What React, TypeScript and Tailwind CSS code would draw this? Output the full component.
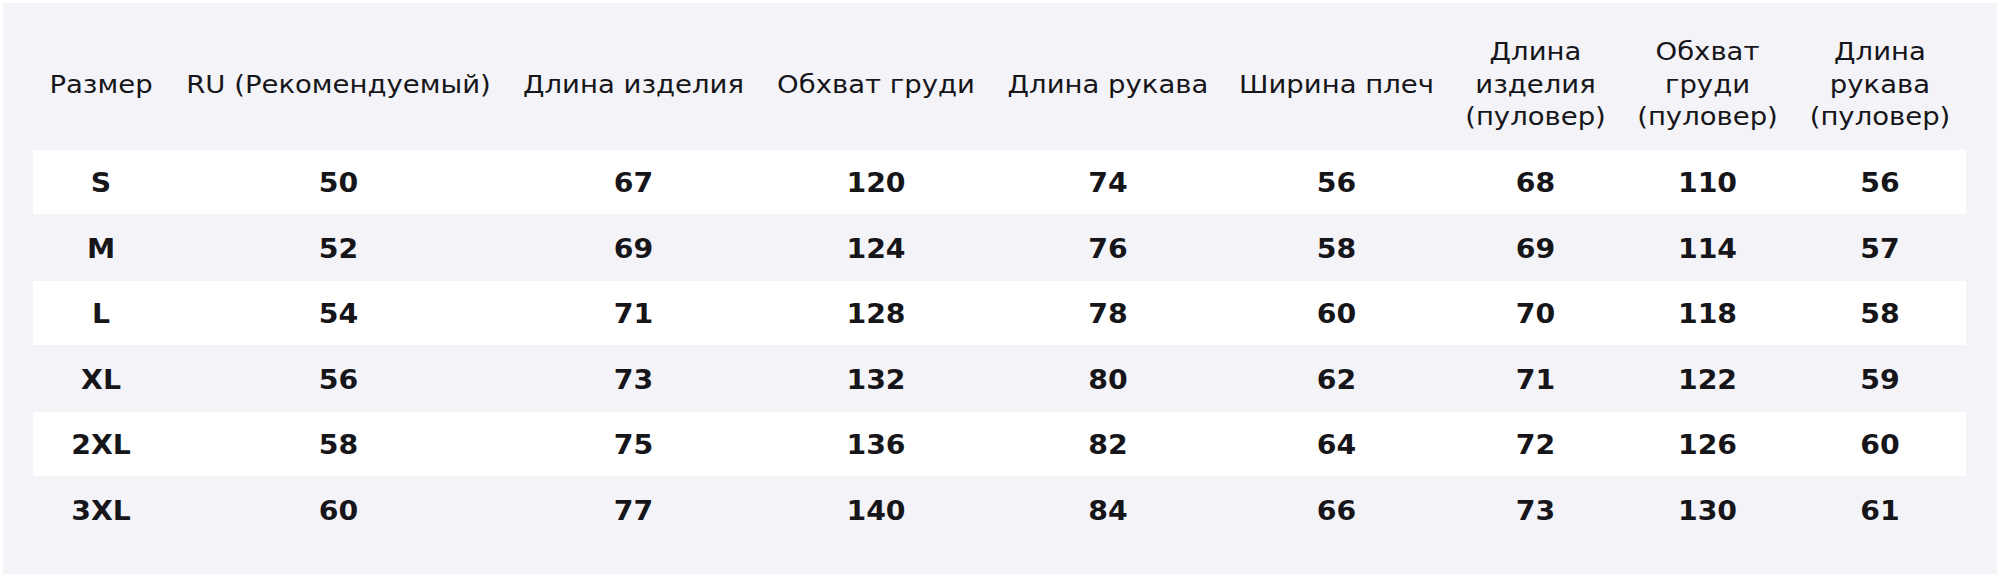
import React from "react";

const headers = [
  "Размер",
  "RU (Рекомендуемый)",
  "Длина изделия",
  "Обхват груди",
  "Длина рукава",
  "Ширина плеч",
  "Длина изделия (пуловер)",
  "Обхват груди (пуловер)",
  "Длина рукава (пуловер)",
];

const widths = [
  "w-[136px]",
  "w-[339px]",
  "w-[251px]",
  "w-[234px]",
  "w-[230px]",
  "w-[227px]",
  "w-[171px]",
  "w-[173px]",
  "w-[172px]",
];

const rows = [
  ["S", "50", "67", "120", "74", "56", "68", "110", "56"],
  ["M", "52", "69", "124", "76", "58", "69", "114", "57"],
  ["L", "54", "71", "128", "78", "60", "70", "118", "58"],
  ["XL", "56", "73", "132", "80", "62", "71", "122", "59"],
  ["2XL", "58", "75", "136", "82", "64", "72", "126", "60"],
  ["3XL", "60", "77", "140", "84", "66", "73", "130", "61"],
];

export default function App() {
  return (
    <div className="w-[2000px] h-[577px] bg-white p-[3px] [font-family:'DejaVu_Sans',sans-serif]">
      <div className="h-full bg-[#f4f4f8] px-[30px] pt-[17px] pb-[30px]">
        <table className="w-[1933px] table-fixed border-collapse text-[#16161a]">
          <thead>
            <tr>
              {headers.map((h, i) => (
                <th
                  key={i}
                  className={`${widths[i]} px-[14px] py-[16px] text-center align-middle font-normal text-[25px] leading-[32.5px]`}
                >
                  <div className="scale-x-[1.1]">{h}</div>
                </th>
              ))}
            </tr>
          </thead>
          <tbody>
            {rows.map((r, ri) => (
              <tr
                key={ri}
                className={ri % 2 === 0 ? "bg-white h-[64px]" : "bg-transparent h-[67px]"}
              >
                {r.map((c, ci) => (
                  <td
                    key={ci}
                    className="px-0 pt-[3px] pb-0 text-center align-middle font-bold text-[27px] leading-[32px]"
                  >
                    <div className="scale-x-[1.05]">{c}</div>
                  </td>
                ))}
              </tr>
            ))}
          </tbody>
        </table>
      </div>
    </div>
  );
}
